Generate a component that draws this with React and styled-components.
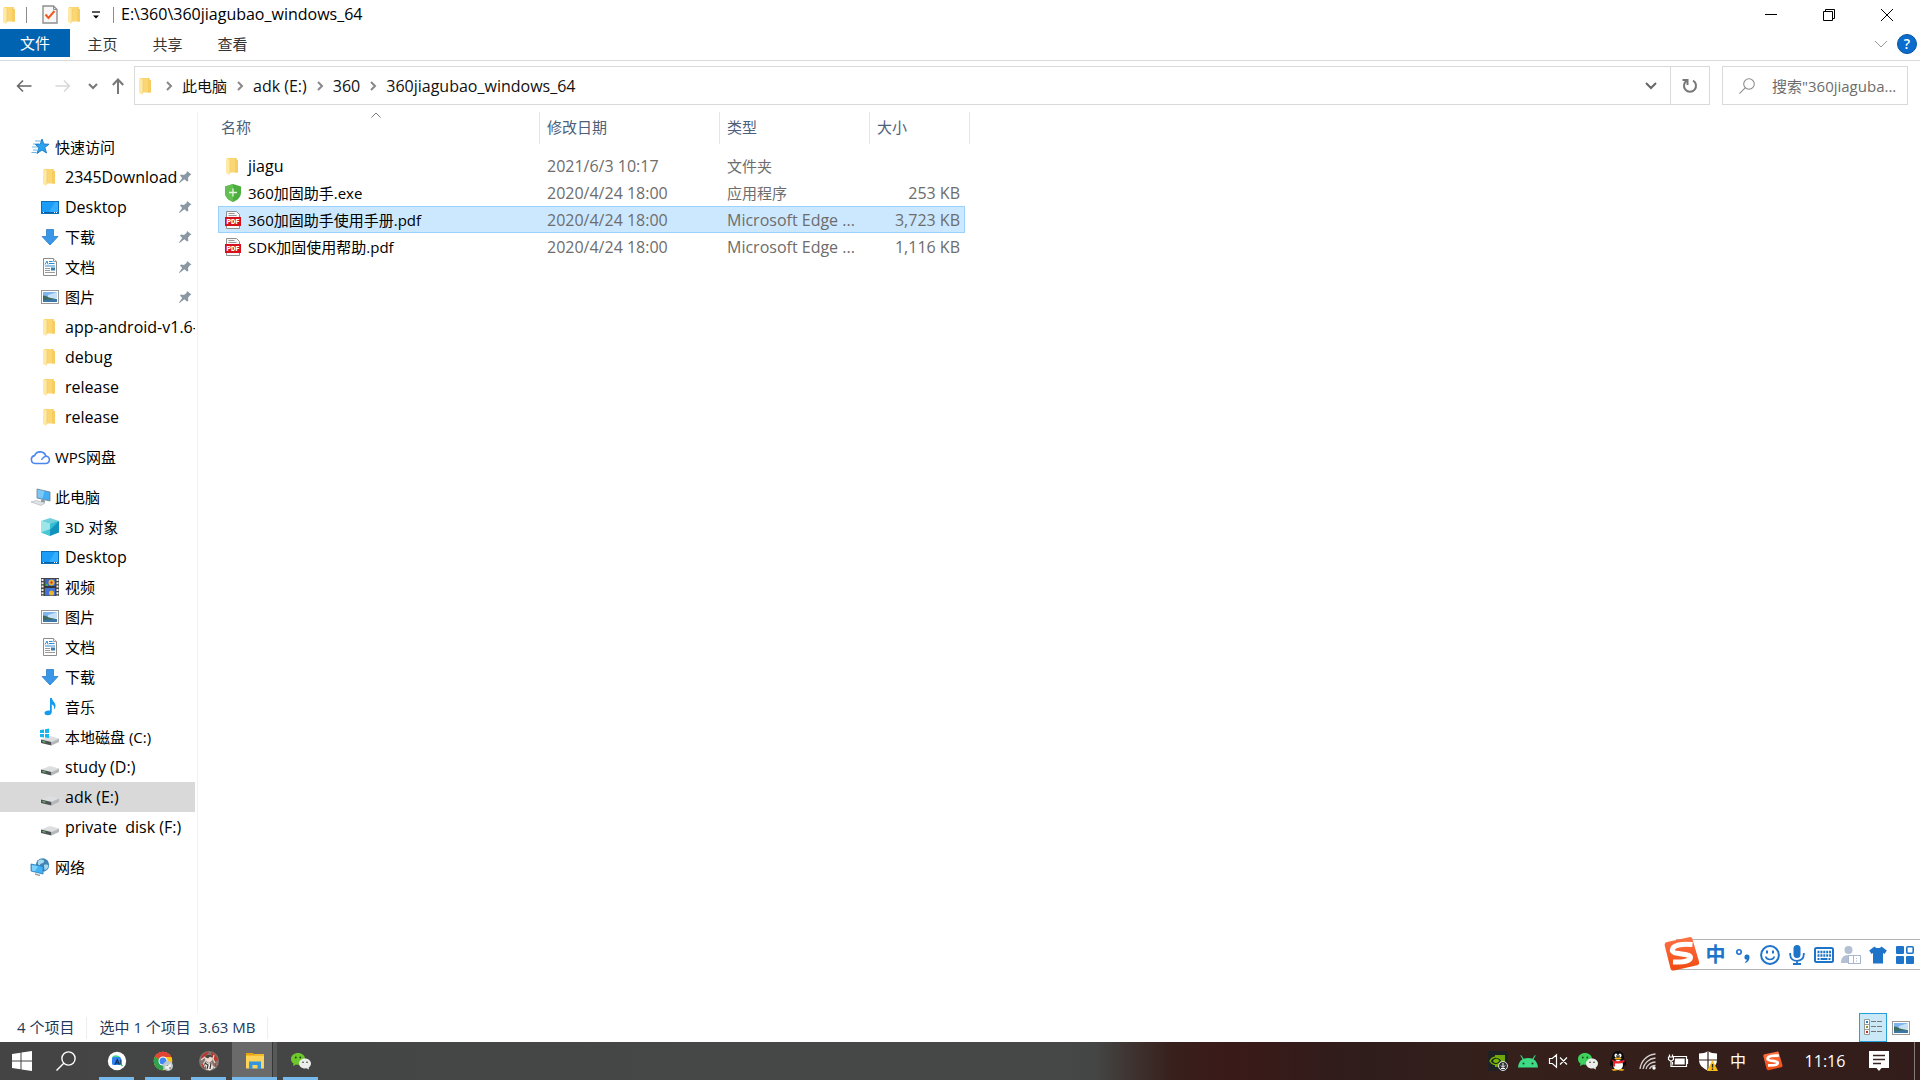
import React, { useState } from 'react';
import styled, { createGlobalStyle, css } from 'styled-components';

const GlobalStyle = createGlobalStyle`
  * {
    box-sizing: border-box;
  }

  body {
    margin: 0;
    background: #fff;
    color: #000;
    font-family: 'Open Sans', 'Noto Sans CJK SC', sans-serif;
    font-size: 15px;
    line-height: 20px;
  }
`;

const bareControl = css`
  display: flex;
  align-items: center;
  justify-content: center;
  padding: 0;
  border: 0;
  background: none;
  color: inherit;
  font: inherit;
`;

const Screen = styled.div`
  display: flex;
  flex-direction: column;
  min-height: 100vh;
`;

const Svg = styled.svg`
  flex: none;
  display: block;
  overflow: visible;
`;

/* title bar and ribbon */

const TitleBar = styled.header`
  display: flex;
  align-items: center;
  height: 29px;
  padding-right: 4px;
`;

const QuickTools = styled.div`
  display: flex;
  align-items: center;
`;

const QuickButton = styled.button`
  ${bareControl}
  width: ${({ $width }) => $width}px;
`;

const Divider = styled.span`
  width: 1px;
  height: 16px;
  margin: 0 7px 0 6px;
  background: #8c8c8c;
`;

const WindowTitle = styled.h1`
  flex: 1;
  margin: 0;
  padding-bottom: 2px;
  font-size: 16px;
  font-weight: 400;
  line-height: 20px;
`;

const WindowButton = styled.button`
  ${bareControl}
  width: 58px;
  height: 28px;
`;

const Ribbon = styled.nav`
  display: flex;
  align-items: center;
  height: 32px;
  padding-right: 3px;
  padding-bottom: 3px;
  border-bottom: 1px solid #d9dadb;
`;

const FileTab = styled.button`
  ${bareControl}
  width: 70px;
  height: 28px;
  background: #0063b1;
  color: #fff;
`;

const RibbonTab = styled.button`
  ${bareControl}
  width: 65px;
  height: 28px;
  padding-top: 2px;
  color: #333;
`;

const RibbonEnd = styled.div`
  display: flex;
  gap: 10px;
  margin-left: auto;
  padding-top: 2px;
`;

const RibbonButton = styled.button`
  ${bareControl}
`;

/* address row */

const AddressRow = styled.div`
  display: flex;
  align-items: center;
  padding: 5px 12px 7px 4px;
`;

const NavButton = styled.button`
  ${bareControl}
  width: ${({ $width }) => $width}px;
  height: 39px;
`;

const AddressBox = styled.div`
  flex: 1;
  display: flex;
  align-items: stretch;
  height: 39px;
  margin-left: 2px;
  border: 1px solid #d9d9d9;
`;

const Crumbs = styled.div`
  flex: 1;
  display: flex;
  align-items: center;
  padding-left: 1px;
`;

const Crumb = styled.a`
  color: #111;
  font-size: ${({ $latin }) => ($latin ? 16 : 15)}px;
  text-decoration: none;
`;

const CrumbArrow = styled.span`
  display: flex;
  justify-content: center;
  width: 26px;
`;

const BoxButton = styled.button`
  ${bareControl}
  width: 39px;
  border-left: ${({ $ruled }) => ($ruled ? '1px solid #d9d9d9' : '0')};
`;

const SearchBox = styled.label`
  display: flex;
  align-items: center;
  gap: 17px;
  width: 186px;
  height: 39px;
  margin-left: 12px;
  padding-left: 16px;
  border: 1px solid #d9d9d9;
`;

const SearchInput = styled.input`
  flex: 1;
  min-width: 0;
  padding: 0;
  border: 0;
  outline: 0;
  font: inherit;

  &::placeholder {
    color: #6d6d6d;
    opacity: 1;
  }
`;

/* body */

const Body = styled.div`
  flex: 1;
  display: flex;
`;

const Sidebar = styled.nav`
  flex: none;
  width: 198px;
  padding: 20px 2px 0 0;
  border-right: 1px solid #f2f2f2;
`;

const TreeGroup = styled.ul`
  margin: 0 0 10px;
  padding: 0;
  list-style: none;
`;

const TreeLink = styled.a`
  display: flex;
  align-items: center;
  height: 30px;
  padding-left: ${({ $root }) => ($root ? 30 : 40)}px;
  padding-right: ${({ $pinned }) => ($pinned ? 3 : 0)}px;
  background: ${({ $current }) => ($current ? '#d9d9d9' : 'transparent')};
  color: #000;
  font-size: ${({ $latin }) => ($latin ? 16 : 15)}px;
  text-decoration: none;
`;

const TreeLabel = styled.span`
  flex: 1;
  min-width: 0;
  padding-left: 5px;
  overflow: hidden;
  white-space: pre;
`;

const FilePane = styled.main`
  flex: 1;
  min-width: 0;
  padding-left: 20px;
`;

const FileTable = styled.table`
  width: 752px;
  table-layout: fixed;
  border-collapse: separate;
  border-spacing: 0;
`;

const HeadCell = styled.th`
  height: 32px;
  padding: 0 0 2px ${({ $first }) => ($first ? 3 : 7)}px;
  border-right: 1px solid #e5e5e5;
  color: #4c607a;
  font-weight: 400;
  text-align: left;
`;

const HeadContent = styled.div`
  position: relative;
`;

const SortMark = styled.span`
  position: absolute;
  top: -5px;
  left: 0;
  right: 8px;
  display: flex;
  justify-content: center;
`;

const HeadGap = styled.td`
  height: 8px;
  padding: 0;
`;

const Cell = styled.td`
  height: 27px;
  padding: 0 5px 0 7px;
  overflow: hidden;
  color: #6d6d6d;
  font-size: ${({ $latin }) => ($latin ? 16 : 15)}px;
  text-align: ${({ $end }) => ($end ? 'right' : 'left')};
  white-space: nowrap;
`;

const FileRow = styled.tr`
  ${({ $selected }) =>
    $selected &&
    css`
      & > ${Cell} {
        border: solid #99d1ff;
        border-width: 1px 0;
        background: #cce8ff;
      }

      & > ${Cell}:first-child {
        border-left-width: 1px;
        padding-left: 4px;
      }

      & > ${Cell}:nth-child(4) {
        border-right-width: 1px;
        padding-right: 4px;
      }
    `}
`;

const NameCell = styled(Cell)`
  padding-left: 5px;
  color: #000;
`;

const FileName = styled.div`
  display: flex;
  align-items: center;
  gap: 5px;
`;

const StatusBar = styled.footer`
  display: flex;
  align-items: center;
  height: 29px;
  padding: 0 5px 0 17px;
  color: #1e395b;
`;

const StatusText = styled.span`
  padding-right: 12px;
  padding-bottom: 2px;
  margin-right: 12px;
  border-right: 1px solid #eee;
  white-space: pre;
`;

const ViewButton = styled.button`
  ${bareControl}
  width: 28px;
  height: 29px;
  border: 1px solid ${({ $active }) => ($active ? '#26a0da' : 'transparent')};
  background: ${({ $active }) => ($active ? '#cbe8f6' : 'none')};
`;

const ViewButtons = styled.div`
  display: flex;
  margin-left: auto;
`;

/* input method bar, floats over the desktop */

const ImeBar = styled.div`
  position: fixed;
  right: 0;
  bottom: 110px;
  display: flex;
  align-items: center;
  height: 31px;
  padding-left: 26px;
  padding-right: 2px;
  border: solid #b4b4b4;
  border-width: 1px 0;
  background: #fff;
`;

const ImeLogo = styled.span`
  position: absolute;
  left: -12px;
  top: -4px;
`;

const ImeButton = styled.button`
  ${bareControl}
  width: 27px;
  height: 28px;
  color: #1e74c8;
`;

const ImeWord = styled.span`
  font-size: 20px;
  font-weight: 700;
`;

/* taskbar */

const Taskbar = styled.div`
  display: flex;
  align-items: stretch;
  height: 38px;
  background: linear-gradient(
    90deg,
    #444 0%,
    #464848 55%,
    #444645 57%,
    #38201c 61%,
    #3a1a18 64%,
    #2f1d1c 71%,
    #35201b 78%,
    #331d1b 100%
  );
  color: #fff;
`;

const StartButton = styled.button`
  ${bareControl}
  width: 44px;
`;

const AppButton = styled.button`
  ${bareControl}
  position: relative;
  width: 45px;
  background: ${({ $active }) =>
    $active ? 'linear-gradient(90deg, #6a6a6a 40px, #373737 40px, #373737 41px, #585858 41px)' : 'none'};

  &::after {
    content: '';
    position: absolute;
    bottom: 0;
    left: ${({ $active }) => ($active ? 0 : 5)}px;
    right: ${({ $active }) => ($active ? 0 : 5)}px;
    height: 3px;
    background: #76b9ed;
  }
`;

const Apps = styled.div`
  display: flex;
  gap: 1px;
  margin-left: 6px;
`;

const Tray = styled.div`
  display: flex;
  margin-left: auto;
  padding-right: 5px;
`;

const TrayButton = styled.button`
  ${bareControl}
  width: ${({ $width }) => $width || 30}px;
  font-size: 16px;
`;

const ShowDesktop = styled.button`
  ${bareControl}
  width: 1px;
  margin-left: 13px;
  background: #85797a;
`;

/* drawings */

const FolderIcon = () => (
  <Svg width="20" height="20" viewBox="0 0 20 20">
    <path d="M4 2h9.500v2H15v12.500H5z" fill="#fbd774" />
    <path d="M12 2h1.500v2H15v12.500h-3z" fill="#f7cd63" />
    <path d="M3 2.500l4 1.200V17l-1 2-3-2z" fill="#ffe9a8" />
    <path d="M7 4v12.500l-1 .5" fill="none" stroke="#f0c75c" strokeWidth=".6" />
  </Svg>
);

const StarIcon = () => (
  <Svg width="20" height="20" viewBox="0 0 20 20">
    <path d="M5 4h6M3 7h6M2 10h6M3 13h4M1.500 15.500h5" stroke="#6ab7e8" strokeWidth="1" />
    <path
      d="M12 2l1.800 5 5.200.2-4.200 3.300L16.500 16 12 13l-5 3.500 1.900-5.800L5.500 7.500l4.800-.3z"
      fill="#2ba3ef"
      stroke="#1478c4"
      strokeWidth=".9"
    />
  </Svg>
);

const DesktopIcon = () => (
  <Svg width="20" height="20" viewBox="0 0 20 20">
    <rect x="1.500" y="4.500" width="17" height="12" fill="#1b9cf7" stroke="#0e70b8" />
    <path d="M9 15l6-10h3v10z" fill="#35aeff" />
    <path d="M2 15.500h16" stroke="#0a5ea4" />
    <path d="M3 15.500h1M14 15.500h1M16 15.500h1" stroke="#fff" />
  </Svg>
);

const DownloadIcon = () => (
  <Svg width="20" height="20" viewBox="0 0 20 20">
    <path
      d="M6.500 2.500h7v7H18l-8 8.500-8-8.500h4.500z"
      fill="#3a97e8"
      stroke="#2a7cc6"
      strokeWidth=".8"
    />
  </Svg>
);

const DocumentIcon = () => (
  <Svg width="20" height="20" viewBox="0 0 20 20">
    <path d="M3.500 1.500h10l3 3v14h-13z" fill="#fff" stroke="#8c8c8c" />
    <path d="M13.500 1.500v3h3" fill="#eee" stroke="#8c8c8c" strokeWidth=".8" />
    <path d="M5 7.500L7 4l1 3.500M9 4.500h3.500M9 6.500h5.500M5 9h10" fill="none" stroke="#2a8dd4" />
    <path d="M5 11.500h5M5 13.500h5M5 15.500h10" stroke="#9a9a9a" />
    <path d="M11 10.500h4v3h-4z" fill="#3d7cab" />
  </Svg>
);

const PictureIcon = () => (
  <Svg width="20" height="20" viewBox="0 0 20 20">
    <rect x="1.500" y="3.500" width="17" height="13" fill="#fff" stroke="#999" />
    <path d="M3 5h14v6H3z" fill="#7fb4ee" />
    <path d="M8 8l9-3v6H8z" fill="#c6e1f7" />
    <path d="M3 8.500c3 0 5 2 8 2.500l6 1v3H3z" fill="#3c6b60" />
    <path d="M3 13l14-1v3H3z" fill="#3b77a8" />
  </Svg>
);

const CloudIcon = () => (
  <Svg width="20" height="20" viewBox="0 0 20 20">
    <path
      d="M5 16.500h10.500a3.700 3.700 0 0 0 .4-7.400A6 6 0 0 0 4.600 8.600 4 4 0 0 0 5 16.500z"
      fill="none"
      stroke="#4a86f0"
      strokeWidth="1.600"
    />
    <path d="M15.800 9.200c-2.500.6-3.300 2-4.300 3.600" fill="none" stroke="#4a86f0" strokeWidth="1.400" />
  </Svg>
);

const ComputerIcon = () => (
  <Svg width="20" height="20" viewBox="0 0 20 20">
    <path d="M7 2l13 3v9L7 11z" fill="#43aef3" stroke="#6d7b86" strokeWidth=".8" />
    <path d="M7.500 2.500l7 1.600-2 7.500-5-1.100z" fill="#7ac8f8" />
    <path d="M11 12.500l4 1v2l-4-.8z" fill="#8b959c" />
    <path d="M1 15l5-1.500 9 2.500-4 2.500z" fill="#dfe3e6" stroke="#a9b0b5" strokeWidth=".6" />
  </Svg>
);

const CubeIcon = () => (
  <Svg width="20" height="20" viewBox="0 0 20 20">
    <path d="M1 4l9-3 9 3-9 3z" fill="#6fd0dc" />
    <path d="M1 4l9 3v12l-9-3.500z" fill="#9ce6ea" />
    <path d="M19 4l-9 3v12l9-3.500z" fill="#1193bd" />
    <path d="M19 4l-9 3v6z" fill="#35bdd2" />
    <path d="M1 15.500L10 12v7z" fill="#47c6d4" />
  </Svg>
);

const VideoIcon = () => (
  <Svg width="20" height="20" viewBox="0 0 20 20">
    <rect x="1" y="1" width="18" height="18" fill="#444" />
    <path d="M2.500 2v17M17.500 2v17" stroke="#eee" strokeWidth="2" strokeDasharray="2 1.300" />
    <rect x="5" y="2" width="10" height="7" fill="#3c66c8" />
    <rect x="5" y="11" width="10" height="7.500" fill="#4572d8" />
    <circle cx="11.500" cy="5.500" r="3" fill="#e8b62c" />
    <circle cx="11.500" cy="5.500" r="1.200" fill="#d8362a" />
    <circle cx="7" cy="8" r="1.200" fill="#3fae49" />
    <circle cx="11.500" cy="16" r="2.500" fill="#e8b62c" />
    <path d="M4 10h12" stroke="#222" />
  </Svg>
);

const MusicIcon = () => (
  <Svg width="20" height="20" viewBox="0 0 20 20">
    <path d="M10 1h1.800c.3 3 4.200 4.500 3.700 8.500-.2 1.500-1 2.500-1.700 3 .8-2.600.2-4-2-5.200V15c0 2-1.700 3.300-4 3.300-2 0-3.300-1-3.300-2.300 0-1.800 2.400-3 5.500-2.500z" fill="#149bf0" />
  </Svg>
);

const DriveIcon = ({ system }) => (
  <Svg width="20" height="20" viewBox="0 0 20 20">
    <path d="M1 12.500L10 9l9 2.500-7.500 3.500z" fill="#dcdee0" />
    <path d="M1 12.500l10.500 2.500v3.500L1 16z" fill="#4d5254" />
    <path d="M11.500 15L19 11.500V15l-7.500 3.500z" fill="#b4b8ba" />
    <path d="M2.500 14.500l3 .7" stroke="#5fd06c" />
    {system && <path d="M0 3l4-.6V6H0zM5 2.200L9 1.600V6H5zM0 7h4v3.500L0 10zM5 7h4v4l-4-.5z" fill="#17b7ee" />}
  </Svg>
);

const NetworkIcon = () => (
  <Svg width="20" height="20" viewBox="0 0 20 20">
    <circle cx="12.500" cy="8" r="6.700" fill="#4284b4" />
    <path d="M8 4c3-3 7-1 6 1s-4 1-4 3-3 0-2-4zM14 8c3-1 4 0 4.500 1-1 3-3 4-4 4z" fill="#a9d9ec" />
    <path d="M1 7l12 2.500v7.500L1 14z" fill="#43b3f5" stroke="#2779b5" strokeWidth=".8" />
    <path d="M2 8l6 1.200-3 5L2 13.500z" fill="#7fd0fa" />
    <path d="M5 17l5 1.500" stroke="#98a4ab" strokeWidth="1.500" />
  </Svg>
);

const PinIcon = () => (
  <Svg width="14" height="14" viewBox="0 0 14 14">
    <path
      d="M9 1l4.500 3.500-1.500.8-2 2.500.3 3.200-1.300.6-2.600-2.300L1.500 13 1 12.500l3.200-4.400L2 5.600l1-1 3 .3L8.500 3z"
      fill="#8b98a3"
    />
  </Svg>
);

const ShieldIcon = () => (
  <Svg width="20" height="20" viewBox="0 0 20 20">
    <path d="M10 1l8 2.500v6c0 5-4 8-8 9.500-4-1.500-8-4.500-8-9.500v-6z" fill="#4cae3f" />
    <path d="M10 1v18c-4-1.500-8-4.500-8-9.500v-6z" fill="#64bf52" />
    <path d="M10 5.500v8M6 9.500h8" stroke="#e6f5e2" strokeWidth="1.300" />
  </Svg>
);

const PdfIcon = () => (
  <Svg width="20" height="20" viewBox="0 0 20 20">
    <path d="M3.500 1.500h10l3 3v14h-13z" fill="#f7f7f7" stroke="#8f8f8f" />
    <path d="M5.500 3.500h6M5.500 5.500h8" stroke="#999" />
    <rect x="2" y="7" width="16" height="9" fill="#d8101c" />
    <text x="10" y="14" textAnchor="middle" fill="#fff" fontFamily="Roboto, sans-serif" fontSize="7" fontWeight="900">
      PDF
    </text>
  </Svg>
);

const CheckPageIcon = () => (
  <Svg width="16" height="19" viewBox="0 0 16 19">
    <path d="M1 1h10.500L15 4.500V18H1z" fill="#f7f7f7" stroke="#8f8f8f" strokeWidth="1.400" />
    <path d="M11.500 1v3.500H15" fill="none" stroke="#8f8f8f" />
    <path d="M3.500 9.500l3 3.500 6-7" fill="none" stroke="#ee5a1f" strokeWidth="2" />
  </Svg>
);

const CustomizeIcon = () => (
  <Svg width="8" height="8" viewBox="0 0 8 8">
    <path d="M0 1h8" stroke="#000" strokeWidth="1.300" />
    <path d="M1 4.500h6L4 7.500z" fill="#000" />
  </Svg>
);

const Stroke = ({ w = 16, h = 16, d, color = '#666', weight = 2 }) => (
  <Svg width={w} height={h} viewBox={`0 0 ${w} ${h}`}>
    <path d={d} fill="none" stroke={color} strokeWidth={weight} />
  </Svg>
);

const HelpIcon = () => (
  <Svg width="20" height="20" viewBox="0 0 20 20">
    <circle cx="10" cy="10" r="9.500" fill="#0a6ccc" stroke="#0b539b" />
    <text x="10" y="15" textAnchor="middle" fill="#fff" fontSize="14" fontWeight="600">
      ?
    </text>
  </Svg>
);

const SearchIcon = ({ size, color, weight }) => (
  <Svg width={size} height={size} viewBox="0 0 20 20">
    <circle cx="12.500" cy="7.500" r="6.600" fill="none" stroke={color} strokeWidth={weight} />
    <path d="M8 12l-7.500 7.500" stroke={color} strokeWidth={weight} />
  </Svg>
);

const DetailsViewIcon = () => (
  <Svg width="18" height="17" viewBox="0 0 18 17">
    <path d="M.5.500h5v15h-5zM.5 5.500h5M.5 10.500h5" fill="#fff" stroke="#999" />
    <path d="M7 2.500h5M13 2.500h5M7 7.500h5M13 7.500h5M7 12.500h5M13 12.500h5" stroke="#777" />
    <path d="M2 3h2" stroke="#2a7fc0" strokeWidth="2" />
    <path d="M2 8h2" stroke="#8a9a2c" strokeWidth="2" />
    <path d="M2 13h2" stroke="#c8321e" strokeWidth="2" />
  </Svg>
);

const SogouIcon = ({ size }) => (
  <Svg width={size} height={size} viewBox="0 0 36 36">
    <defs>
      <linearGradient id="sogou" x1="0" y1="0" x2="0" y2="1">
        <stop offset="0" stopColor="#ff7245" />
        <stop offset="1" stopColor="#f04a10" />
      </linearGradient>
    </defs>
    <path
      d="M3 6L25 1.200c2-.4 3 .4 3.500 2L35 25.500c.6 2-.2 3.400-2 3.800L10 34.500c-2 .4-3-.4-3.500-2L.8 10C.3 8 1 6.500 3 6z"
      fill="url(#sogou)"
    />
    <path
      d="M28.500 8.500C18 7.500 8.500 9 8.300 14.200c-.2 5 18.500 2.500 18.200 7.300-.2 4-9 4.800-17.500 4.500"
      fill="none"
      stroke="#fff"
      strokeWidth="5"
    />
  </Svg>
);

const PunctuationIcon = () => (
  <Svg width="16" height="16" viewBox="0 0 16 16">
    <circle cx="4" cy="5" r="2.200" fill="none" stroke="currentColor" strokeWidth="1.600" />
    <path d="M12 7.500a2.500 2.500 0 0 1 2.500 2.700c0 2.800-1.500 4.800-4 5.800l-.5-1c1.200-.7 1.700-1.500 1.800-2.500A2.500 2.500 0 0 1 12 7.500z" fill="currentColor" />
  </Svg>
);

const SmileIcon = () => (
  <Svg width="20" height="20" viewBox="0 0 20 20">
    <circle cx="10" cy="10" r="8.900" fill="none" stroke="currentColor" strokeWidth="2" />
    <path d="M7 5.500v3M13 5.500v3" stroke="currentColor" strokeWidth="2" />
    <path d="M5.500 11.500c1.500 4 7.500 4 9 0" fill="none" stroke="currentColor" strokeWidth="1.600" />
  </Svg>
);

const MicIcon = () => (
  <Svg width="16" height="20" viewBox="0 0 16 20">
    <rect x="4.500" y="0" width="7" height="13" rx="3.500" fill="currentColor" />
    <path d="M1.200 8v1.500c0 8.500 13.600 8.500 13.600 0V8M8 16v3M4 19h8" fill="none" stroke="currentColor" strokeWidth="1.800" />
  </Svg>
);

const KeyboardIcon = () => (
  <Svg width="20" height="16" viewBox="0 0 20 16">
    <rect x="1" y="1" width="18" height="14" rx="1.500" fill="none" stroke="currentColor" strokeWidth="2" />
    <path d="M3.500 5h13.500M3.500 8.500h13.500" stroke="currentColor" strokeWidth="2.400" strokeDasharray="2 .9" />
    <path d="M3.500 12h2M6.500 12h7M14.500 12h2" stroke="currentColor" strokeWidth="2" />
  </Svg>
);

const PersonIcon = () => (
  <Svg width="20" height="18" viewBox="0 0 20 18">
    <circle cx="7.500" cy="4" r="4" fill="#b3bfd3" />
    <path d="M0 17c0-5 2-8 7.500-8 3 0 5 1 5 1v7z" fill="#b3bfd3" />
    <rect x="7.500" y="9.500" width="12" height="8" fill="#fff" stroke="#a9b7ce" />
    <path d="M12.500 10v7M15.500 12v1M15.500 14.500v1" stroke="#a9b7ce" />
  </Svg>
);

const ShirtIcon = () => (
  <Svg width="18" height="18" viewBox="0 0 18 18">
    <path d="M5.500.500c1.500 2 5.500 2 7 0l5.300 4L15.500 8 14 7v10.500H4V7L2.500 8 .2 4.500z" fill="currentColor" />
  </Svg>
);

const GridIcon = () => (
  <Svg width="18" height="18" viewBox="0 0 18 18">
    <rect x="0" y="0" width="8" height="8" rx="1" fill="currentColor" />
    <rect x="10.800" y=".8" width="6.400" height="6.400" rx="1" fill="none" stroke="currentColor" strokeWidth="1.600" />
    <rect x="0" y="10" width="8" height="8" rx="1" fill="currentColor" />
    <rect x="10" y="10" width="8" height="8" rx="1" fill="currentColor" />
  </Svg>
);

const WindowsIcon = () => (
  <Svg width="20" height="20" viewBox="0 0 20 20">
    <path d="M0 3l8.500-1.300v7.800H0zM9.500 1.500L20 0v9.500H9.500zM0 10.500h8.500v7.800L0 17zM9.500 10.500H20V20L9.500 18.500z" fill="#fff" />
  </Svg>
);

const StudioIcon = () => (
  <Svg width="20" height="20" viewBox="0 0 20 20">
    <circle cx="10" cy="10" r="9.200" fill="#fff" />
    <path d="M5 7.500c0-4 7-4.500 8.500 0z" fill="#3ddb84" />
    <rect x="5" y="6" width="9" height="8" rx="1.500" fill="#3184f0" />
    <path d="M13.500 13l2 2" stroke="#36c876" strokeWidth="1.400" />
    <path d="M8 13.500l2.200-5 2.200 5M9 12h2.500M14 8.500v5" fill="none" stroke="#0b2b4e" strokeWidth="1.100" />
  </Svg>
);

const ChromeIcon = () => (
  <Svg width="20" height="20" viewBox="0 0 20 20">
    <circle cx="10" cy="10" r="9.300" fill="#fbc312" />
    <path d="M10 10L1.900 5.400A9.300 9.300 0 0 0 9.500 19.300l4-7z" fill="#2fa14f" />
    <path d="M10 10L1.900 5.400A9.300 9.300 0 0 1 18.400 6H10z" fill="#e14436" />
    <circle cx="10" cy="10" r="4.500" fill="#fff" />
    <circle cx="10" cy="10" r="3.500" fill="#4285f4" />
    <circle cx="15" cy="15" r="5" fill="#b8c7d0" />
    <path d="M12 17l1-4 2 2 2.500-3 .5 4-2 3z" fill="#f1f1ec" />
    <path d="M13.500 14.500h1M16 17h2" stroke="#6d6155" />
  </Svg>
);

const AvatarIcon = () => (
  <Svg width="20" height="20" viewBox="0 0 20 20">
    <circle cx="10" cy="10" r="10" fill="#85756e" />
    <path d="M2 6c2-3 4-5 8-5l-3 4-3 4zM12 1c3 1 6 4 7 8l-3 2-3-4z" fill="#b83a2d" />
    <path d="M2 9l4-3 1 3-4 6M15 4l-1 4 3 6M5 16l3-4M13 15l3 2" fill="none" stroke="#dfd8d0" strokeWidth="1.200" />
    <path d="M6.500 6c1-3 6-3 7 0v3l-3.500 3-3-2z" fill="#ecdcd2" />
    <path d="M6 6c1-3 7-3 8 0l-2 .5-1-1-2 2z" fill="#4c4140" />
    <path d="M7 11l3 1.500 3-1 1 6-3 2-4-1z" fill="#efe9e4" />
    <path d="M6 12l3 2-1 4M12 12l-1 6" fill="none" stroke="#3b3436" strokeWidth="1.200" />
    <path d="M3 13l2 4M16 12l1 3" stroke="#b4382e" strokeWidth="1.400" />
  </Svg>
);

const ExplorerIcon = () => (
  <Svg width="20" height="20" viewBox="0 0 20 20">
    <path d="M1 2h7l1.500 2H1z" fill="#e6a414" />
    <path d="M1 4h18v13.500H1z" fill="#fdd35a" />
    <path d="M1 4h7l1.500-1H19v2H1z" fill="#f5b92c" />
    <path d="M4 10.500h12v7.500h-3.500v-4h-5v4H4z" fill="#3494dc" />
  </Svg>
);

const WeChatIcon = ({ flat }) => (
  <Svg width="20" height="20" viewBox="0 0 20 20">
    <path
      d="M7 2C3 2 0 4.500 0 8c0 2 1 3.500 2.500 4.500L2 15l3-1.500c5 1 9-1.500 9-5.500 0-3.500-3-6-7-6z"
      fill={flat ? '#3dd25c' : '#6ec82c'}
    />
    <path d="M14 7.500c-3.300 0-6 2.200-6 5s2.700 5 6 5l1.500-.2L18 18.500l-.3-2C19.200 15.500 20 14 20 12.500c0-2.800-2.700-5-6-5z" fill="#ececec" />
    <g fill="#234117">
      <circle cx="4.800" cy="6.500" r=".9" />
      <circle cx="9.300" cy="6.500" r=".9" />
      <circle cx="12" cy="11.200" r=".8" />
      <circle cx="16" cy="11.200" r=".8" />
    </g>
  </Svg>
);

const NvidiaIcon = () => (
  <Svg width="20" height="20" viewBox="0 0 20 20">
    <rect width="20" height="20" fill="#202124" />
    <path d="M7 4h10v12H7z" fill="#6ea50e" />
    <path d="M2 10c2-4 7-6 12-1-3 6-9 6-12 1z" fill="#202124" stroke="#76b900" strokeWidth="1.300" />
    <path d="M5 10c1.500-2.500 4-3 6.500-.5C10 12.500 7 13 5 10z" fill="#76b900" />
    <circle cx="15" cy="15" r="4.500" fill="#333" stroke="#ddd" />
    <path d="M15 12v4M13 14.500l2 2 2-2M13 17.500h4" fill="none" stroke="#fff" />
  </Svg>
);

const AndroidIcon = () => (
  <Svg width="20" height="20" viewBox="0 0 20 20">
    <path d="M0 16.500C.3 12.500 2 9.800 4.500 8.300L2.300 4.500l.7-.4 2.600 3.700c2.700-1.100 6.100-1.100 8.800 0L17 4.100l.7.4-2.200 3.800c2.500 1.500 4.200 4.200 4.500 8.200z" fill="#3ddc84" />
    <circle cx="5.500" cy="12.500" r="1" fill="#27332b" />
    <circle cx="14.500" cy="12.500" r="1" fill="#27332b" />
  </Svg>
);

const QqIcon = () => (
  <Svg width="20" height="20" viewBox="0 0 20 20">
    <path d="M10 0c4 0 6 3 6 7 1.500 2 2.500 5 2 8-1-.3-1.500-1-1.500-1-.5 3-3 5-6.500 5s-6-2-6.500-5c0 0-.5.7-1.500 1-.5-3 .5-6 2-8 0-4 2-7 6-7z" fill="#0b0b0b" />
    <ellipse cx="10" cy="14" rx="5" ry="5" fill="#fff" />
    <ellipse cx="8" cy="4.500" rx="1.500" ry="2" fill="#fff" />
    <ellipse cx="12" cy="4.500" rx="1.500" ry="2" fill="#fff" />
    <path d="M8.500 4.500v1M11.500 4.500v1" stroke="#000" />
    <ellipse cx="10" cy="7.500" rx="3.500" ry="1.100" fill="#fab619" />
    <path d="M3.500 8.500c4 2.300 9 2.300 13 0v2.500c-2 1-4 1.500-6 1.600H7v3H5V11z" fill="#e9252c" />
    <path d="M3.500 18.500c2-1 5-.8 6 .8-2 .8-5 .7-6-.8zM10.500 19.300c1-1.600 4-1.800 6-.8-1 1.500-4 1.600-6 .8z" fill="#fab619" />
  </Svg>
);

const SpeakerIcon = () => (
  <Svg width="20" height="20" viewBox="0 0 20 20">
    <path d="M1.500 7.500h2.800L8.500 3.800v12.400L4.300 12.500H1.500zM12 6.500l7 7M19 6.500l-7 7" fill="none" stroke="#fff" strokeWidth="1.200" />
  </Svg>
);

const WifiIcon = () => (
  <Svg width="18" height="18" viewBox="0 0 18 18">
    <path d="M1 17C2 9 8 2.500 16.500 2M4 17C5 11 10 6.500 16.500 6M7 17c1-4 5-7 9.500-7M10.500 17c.8-1.800 3-3.500 6-3.500" fill="none" stroke="#d8d0d0" strokeWidth="1.300" />
    <circle cx="15" cy="16" r="1.700" fill="#fff" />
  </Svg>
);

const BatteryIcon = () => (
  <Svg width="20" height="20" viewBox="0 0 20 20">
    <path d="M5 5.500h13.500v10H4.500V11M18.500 8.500h1v4h-1" fill="none" stroke="#fff" strokeWidth="1.200" />
    <path d="M7 7.500h9.700v6H6.500z" fill="#fff" />
    <path d="M.5 6h5v2.500L3 10.500.500 8.500zM1.500 6V3.500M4.500 6V3.500M3 10v5.500h2" fill="#35201b" stroke="#fff" strokeWidth="1.200" />
  </Svg>
);

const DefenderIcon = () => (
  <Svg width="20" height="20" viewBox="0 0 20 20">
    <path d="M10 0c2.500 1.800 5.500 2.500 9 2.500V9c0 5-4 8.500-9 10.500C5 17.500 1 14 1 9V2.500C4.500 2.500 7.500 1.800 10 0z" fill="#fff" />
    <path d="M10 0v19.500M1 9h18" stroke="#35201b" strokeWidth="1.200" />
    <path d="M14.500 9L20 20H9z" fill="#fbbc17" />
    <path d="M14.500 13v3.500M14.500 17.500v1.500" stroke="#222" strokeWidth="1.400" />
  </Svg>
);

const NoticeIcon = () => (
  <Svg width="20" height="20" viewBox="0 0 20 20">
    <path d="M0 0h20v17h-7.500L10 20l-2.500-3H0z" fill="#fff" />
    <path d="M4 4.500h12M4 8.500h12M4 12.500h8" stroke="#3a2422" strokeWidth="1.300" />
  </Svg>
);

/* data */

const tree = [
  [
    { label: '快速访问', icon: StarIcon, root: true },
    { label: '2345Download', icon: FolderIcon, latin: true, pinned: true },
    { label: 'Desktop', icon: DesktopIcon, latin: true, pinned: true },
    { label: '下载', icon: DownloadIcon, pinned: true },
    { label: '文档', icon: DocumentIcon, pinned: true },
    { label: '图片', icon: PictureIcon, pinned: true },
    { label: 'app-android-v1.6-', icon: FolderIcon, latin: true },
    { label: 'debug', icon: FolderIcon, latin: true },
    { label: 'release', icon: FolderIcon, latin: true },
    { label: 'release', icon: FolderIcon, latin: true },
  ],
  [{ label: 'WPS网盘', icon: CloudIcon, root: true }],
  [
    { label: '此电脑', icon: ComputerIcon, root: true },
    { label: '3D 对象', icon: CubeIcon },
    { label: 'Desktop', icon: DesktopIcon, latin: true },
    { label: '视频', icon: VideoIcon },
    { label: '图片', icon: PictureIcon },
    { label: '文档', icon: DocumentIcon },
    { label: '下载', icon: DownloadIcon },
    { label: '音乐', icon: MusicIcon },
    { label: '本地磁盘 (C:)', icon: DriveIcon, system: true },
    { label: 'study (D:)', icon: DriveIcon, latin: true },
    { label: 'adk (E:)', icon: DriveIcon, latin: true, current: true },
    { label: 'private  disk (F:)', icon: DriveIcon, latin: true },
  ],
  [{ label: '网络', icon: NetworkIcon, root: true }],
];

const files = [
  { name: 'jiagu', icon: FolderIcon, date: '2021/6/3 10:17', type: '文件夹', size: '', latin: true },
  { name: '360加固助手.exe', icon: ShieldIcon, date: '2020/4/24 18:00', type: '应用程序', size: '253 KB' },
  { name: '360加固助手使用手册.pdf', icon: PdfIcon, date: '2020/4/24 18:00', type: 'Microsoft Edge ...', size: '3,723 KB' },
  { name: 'SDK加固使用帮助.pdf', icon: PdfIcon, date: '2020/4/24 18:00', type: 'Microsoft Edge ...', size: '1,116 KB' },
];

const crumbs = [
  { label: '此电脑' },
  { label: 'adk (E:)', latin: true },
  { label: '360', latin: true },
  { label: '360jiagubao_windows_64', latin: true },
];

const App = () => {
  const [selected, setSelected] = useState(2);
  const [query, setQuery] = useState('');

  return (
    <>
      <GlobalStyle />
      <Screen>
        <TitleBar>
          <QuickTools>
            <FolderIcon />
            <Divider />
            <QuickButton $width={31} aria-label="属性">
              <CheckPageIcon />
            </QuickButton>
            <FolderIcon />
            <QuickButton $width={22} aria-label="自定义快速访问工具栏">
              <CustomizeIcon />
            </QuickButton>
            <Divider />
          </QuickTools>
          <WindowTitle>E:\360\360jiagubao_windows_64</WindowTitle>
          <WindowButton aria-label="最小化">
            <Stroke w={12} h={12} d="M0 5.500h12" color="#000" weight={1} />
          </WindowButton>
          <WindowButton aria-label="还原">
            <Stroke w={12} h={12} d="M.5 2.500h9v9h-9zM2.500 2.500v-2h9v9h-2" color="#000" weight={1} />
          </WindowButton>
          <WindowButton aria-label="关闭">
            <Stroke w={12} h={12} d="M0 0l12 12M12 0L0 12" color="#000" weight={1} />
          </WindowButton>
        </TitleBar>

        <Ribbon>
          <FileTab>文件</FileTab>
          <RibbonTab>主页</RibbonTab>
          <RibbonTab>共享</RibbonTab>
          <RibbonTab>查看</RibbonTab>
          <RibbonEnd>
            <RibbonButton aria-label="展开功能区">
              <Stroke w={12} h={8} d="M0 1l6 6 6-6" color="#999" weight={1} />
            </RibbonButton>
            <RibbonButton aria-label="帮助">
              <HelpIcon />
            </RibbonButton>
          </RibbonEnd>
        </Ribbon>

        <AddressRow>
          <NavButton $width={39} aria-label="返回">
            <Stroke d="M15.500 8H1.500M7 2.500L1.500 8 7 13.500" weight={1.5} />
          </NavButton>
          <NavButton $width={39} aria-label="前进">
            <Stroke d="M.5 8h14M9 2.500L14.500 8 9 13.500" color="#d8d8d8" weight={1.5} />
          </NavButton>
          <NavButton $width={22} aria-label="最近浏览的位置">
            <Stroke w={8} h={6} d="M0 1l4 4 4-4" color="#777" />
          </NavButton>
          <NavButton $width={28} aria-label="上移">
            <Stroke w={12} h={16} d="M6 16V1.500M.8 7L6 1.500 11.200 7" color="#777" />
          </NavButton>
          <AddressBox>
            <Crumbs>
              <FolderIcon />
              {crumbs.map(({ label, latin }) => (
                <React.Fragment key={label}>
                  <CrumbArrow>
                    <Stroke w={6} h={8} d="M1 0l4 4-4 4" color="#888" />
                  </CrumbArrow>
                  <Crumb href="#" $latin={latin}>
                    {label}
                  </Crumb>
                </React.Fragment>
              ))}
            </Crumbs>
            <BoxButton aria-label="以前的位置">
              <Stroke w={10} h={8} d="M0 1l5 5 5-5" />
            </BoxButton>
            <BoxButton $ruled aria-label="刷新">
              <Stroke d="M5 2.500A6 6 0 1 0 11 2.500M5.500 7V2H.5" color="#777" />
            </BoxButton>
          </AddressBox>
          <SearchBox>
            <SearchIcon size={16} color="#888" weight={1.3} />
            <SearchInput
              aria-label="搜索"
              placeholder={'搜索"360jiaguba...'}
              value={query}
              onChange={(e) => setQuery(e.target.value)}
            />
          </SearchBox>
        </AddressRow>

        <Body>
          <Sidebar>
            {tree.map((group, i) => (
              <TreeGroup key={i}>
                {group.map(({ label, icon: Icon, root, latin, pinned, current, system }, j) => (
                  <li key={j}>
                    <TreeLink href="#" $root={root} $latin={latin} $pinned={pinned} $current={current}>
                      <Icon system={system} />
                      <TreeLabel>{label}</TreeLabel>
                      {pinned && <PinIcon />}
                    </TreeLink>
                  </li>
                ))}
              </TreeGroup>
            ))}
          </Sidebar>

          <FilePane>
            <FileTable>
              <colgroup>
                <col width="322" />
                <col width="180" />
                <col width="150" />
                <col width="95" />
                <col width="5" />
              </colgroup>
              <thead>
                <tr>
                  <HeadCell $first>
                    <HeadContent>
                      名称
                      <SortMark>
                        <Stroke w={10} h={6} d="M.5 5.500L5 1l4.500 4.500" color="#777" weight={1} />
                      </SortMark>
                    </HeadContent>
                  </HeadCell>
                  <HeadCell>修改日期</HeadCell>
                  <HeadCell>类型</HeadCell>
                  <HeadCell colSpan={2}>大小</HeadCell>
                </tr>
              </thead>
              <tbody>
                <tr>
                  <HeadGap colSpan={5} />
                </tr>
                {files.map(({ name, icon: Icon, date, type, size, latin }, i) => (
                  <FileRow key={name} $selected={i === selected} onClick={() => setSelected(i)}>
                    <NameCell $latin={latin}>
                      <FileName>
                        <Icon />
                        {name}
                      </FileName>
                    </NameCell>
                    <Cell $latin>{date}</Cell>
                    <Cell $latin={type.startsWith('M')}>{type}</Cell>
                    <Cell $latin $end>
                      {size}
                    </Cell>
                    <td />
                  </FileRow>
                ))}
              </tbody>
            </FileTable>
          </FilePane>
        </Body>

        <StatusBar>
          <StatusText>4 个项目</StatusText>
          <StatusText>选中 1 个项目  3.63 MB</StatusText>
          <ViewButtons>
            <ViewButton $active aria-label="详细信息">
              <DetailsViewIcon />
            </ViewButton>
            <ViewButton aria-label="大缩略图">
              <PictureIcon />
            </ViewButton>
          </ViewButtons>
        </StatusBar>

        <Taskbar>
          <StartButton aria-label="开始">
            <WindowsIcon />
          </StartButton>
          <StartButton aria-label="搜索">
            <SearchIcon size={20} color="#fff" weight={1.4} />
          </StartButton>
          <Apps>
            <AppButton aria-label="Android Studio">
              <StudioIcon />
            </AppButton>
            <AppButton aria-label="Chrome">
              <ChromeIcon />
            </AppButton>
            <AppButton aria-label="游戏">
              <AvatarIcon />
            </AppButton>
            <AppButton $active aria-label="文件资源管理器">
              <ExplorerIcon />
            </AppButton>
            <AppButton aria-label="微信">
              <WeChatIcon />
            </AppButton>
          </Apps>
          <Tray>
            <TrayButton aria-label="NVIDIA">
              <NvidiaIcon />
            </TrayButton>
            <TrayButton aria-label="Android">
              <AndroidIcon />
            </TrayButton>
            <TrayButton aria-label="静音">
              <SpeakerIcon />
            </TrayButton>
            <TrayButton aria-label="微信">
              <WeChatIcon flat />
            </TrayButton>
            <TrayButton aria-label="QQ">
              <QqIcon />
            </TrayButton>
            <TrayButton aria-label="网络">
              <WifiIcon />
            </TrayButton>
            <TrayButton aria-label="电源">
              <BatteryIcon />
            </TrayButton>
            <TrayButton aria-label="安全中心">
              <DefenderIcon />
            </TrayButton>
            <TrayButton>中</TrayButton>
            <TrayButton $width={40} aria-label="搜狗输入法">
              <SogouIcon size={20} />
            </TrayButton>
            <TrayButton $width={64}>11:16</TrayButton>
            <TrayButton $width={44} aria-label="通知">
              <NoticeIcon />
            </TrayButton>
            <ShowDesktop aria-label="显示桌面" />
          </Tray>
        </Taskbar>
      </Screen>

      <ImeBar>
        <ImeLogo>
          <SogouIcon size={36} />
        </ImeLogo>
        <ImeButton>
          <ImeWord>中</ImeWord>
        </ImeButton>
        <ImeButton aria-label="标点">
          <PunctuationIcon />
        </ImeButton>
        <ImeButton aria-label="表情">
          <SmileIcon />
        </ImeButton>
        <ImeButton aria-label="语音">
          <MicIcon />
        </ImeButton>
        <ImeButton aria-label="键盘">
          <KeyboardIcon />
        </ImeButton>
        <ImeButton aria-label="账户">
          <PersonIcon />
        </ImeButton>
        <ImeButton aria-label="皮肤">
          <ShirtIcon />
        </ImeButton>
        <ImeButton aria-label="工具箱">
          <GridIcon />
        </ImeButton>
      </ImeBar>
    </>
  );
};

export default App;
